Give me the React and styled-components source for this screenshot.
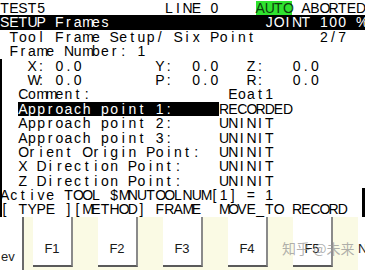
import React from 'react';
import styled, { createGlobalStyle } from 'styled-components';

const COLS = 40;
const CELL = 365 / COLS;

const GlobalStyle = createGlobalStyle`
  * { box-sizing: border-box; }
  html, body { margin: 0; padding: 0; background: #fff; }
  body { width: 365px; height: 270px; overflow: hidden; font-family: "Liberation Sans Narrow", "Liberation Sans", Arial, sans-serif; }
`;

const Pendant = styled.div`width:365px;height:270px;display:flex;flex-direction:column;background:#fff;overflow:hidden;`;
const Screen = styled.div`display:flex;flex-direction:column;padding-top:1px;`;
const Body = styled.div`display:flex;flex-direction:column;box-shadow:inset 2px 0 0 #000;`;
const Row = styled.div`display:flex;height:14.4px;line-height:14.4px;font-size:14px;
  background:${p => (p.$bar ? '#000' : 'transparent')};color:${p => (p.$bar ? '#fff' : '#000')};
  box-shadow:${p => (p.$edge ? 'inset -3px 0 0 #000' : 'none')};`;
const Seg = styled.span`display:flex;
  background:${p => (p.$v === 'inv' ? '#000' : p.$v === 'auto' ? '#2fe22f' : 'transparent')};
  color:${p => (p.$v === 'inv' ? '#fff' : p.$v === 'auto' ? '#0c3a0c' : 'inherit')};`;
const Cell = styled.span`flex:none;width:${CELL}px;text-align:center;white-space:pre;`;

const KeyBar = styled.div`flex:1;display:flex;background:#fafae4;position:relative;box-shadow:inset -3px 0 0 #000;`;
const EdgeKey = styled.div`flex:none;width:24px;background:#fff;border-right:2px solid #6a6a6a;padding:32px 0 0 1px;font:13px "Liberation Sans", Arial, sans-serif;color:#222;`;
const Keys = styled.div`flex:1;display:flex;gap:25px;padding-left:9px;`;
const Key = styled.div`flex:none;width:40px;height:50px;background:#fff;border-right:2px solid #8a8a8a;border-bottom:2px solid #5a5a5a;
  padding-top:25px;text-align:center;font:13px/14px "Liberation Sans", Arial, sans-serif;color:#1a1a1a;`;
const NextKey = styled.div`flex:1;overflow:hidden;background:#fff;padding-top:25px;font:13px/14px "Liberation Sans", Arial, sans-serif;color:#1a1a1a;`;
const Watermark = styled.div`position:absolute;left:282px;top:21px;font:14px "Noto Sans CJK SC", sans-serif;color:rgba(150,150,150,.75);white-space:pre;letter-spacing:0;`;

const rows = [
  { segs: [[0, 'TEST5'], [18, 'LINE 0'], [28, 'AUTO', 'auto'], [33, 'ABORTED']] },
  { bar: true, segs: [[0, 'SETUP Frames'], [29, 'JOINT 100 %']] },
  { segs: [[1, 'Tool Frame Setup/ Six Point'], [35, '2/7']] },
  { segs: [[1, 'Frame Number: 1']] },
  { body: true, segs: [[3, 'X:'], [6, '0.0'], [17, 'Y:'], [21, '0.0'], [27, 'Z:'], [32, '0.0']] },
  { body: true, segs: [[3, 'W:'], [6, '0.0'], [17, 'P:'], [21, '0.0'], [27, 'R:'], [32, '0.0']] },
  { body: true, segs: [[2, 'Comment:'], [25, 'Eoat1']] },
  { body: true, segs: [[2, 'Approach point 1:'.padEnd(22), 'inv'], [24, 'RECORDED']] },
  { body: true, segs: [[2, 'Approach point 2:'], [24, 'UNINIT']] },
  { body: true, segs: [[2, 'Approach point 3:'], [24, 'UNINIT']] },
  { body: true, segs: [[2, 'Orient Origin Point:'], [24, 'UNINIT']] },
  { body: true, segs: [[2, 'X Direction Point:'], [24, 'UNINIT']] },
  { body: true, segs: [[2, 'Z Direction Point:'], [24, 'UNINIT']] },
  { body: true, edge: true, segs: [[0, 'Active TOOL $MNUTOOLNUM[1] = 1']] },
  { body: true, edge: true, segs: [[0, '[ TYPE ][METHOD] FRAME  MOVE_TO RECORD']] },
];

// turn [col, text, variant] list into consecutive runs covering 40 columns
function toRuns(segs) {
  const runs = [];
  let col = 0;
  segs.forEach(([start, text, v]) => {
    if (start > col) runs.push({ text: ' '.repeat(start - col) });
    runs.push({ text, v });
    col = start + text.length;
  });
  if (col < COLS) runs.push({ text: ' '.repeat(COLS - col) });
  return runs;
}

function Line({ row }) {
  return (
    <Row $bar={row.bar} $edge={row.edge}>
      {toRuns(row.segs).map((r, i) => (
        <Seg key={i} $v={r.v}>
          {[...r.text].map((ch, j) => <Cell key={j}>{ch}</Cell>)}
        </Seg>
      ))}
    </Row>
  );
}

export default function App() {
  const top = rows.filter(r => !r.body);
  const body = rows.filter(r => r.body);
  return (
    <Pendant>
      <GlobalStyle />
      <Screen>
        {top.map((r, i) => <Line key={i} row={r} />)}
        <Body>
          {body.map((r, i) => <Line key={i} row={r} />)}
        </Body>
      </Screen>
      <KeyBar>
        <EdgeKey>ev</EdgeKey>
        <Keys>
          {['F1', 'F2', 'F3', 'F4', 'F5'].map(k => <Key key={k}>{k}</Key>)}
          <NextKey>N</NextKey>
        </Keys>
        <Watermark>知乎 @未来</Watermark>
      </KeyBar>
    </Pendant>
  );
}
